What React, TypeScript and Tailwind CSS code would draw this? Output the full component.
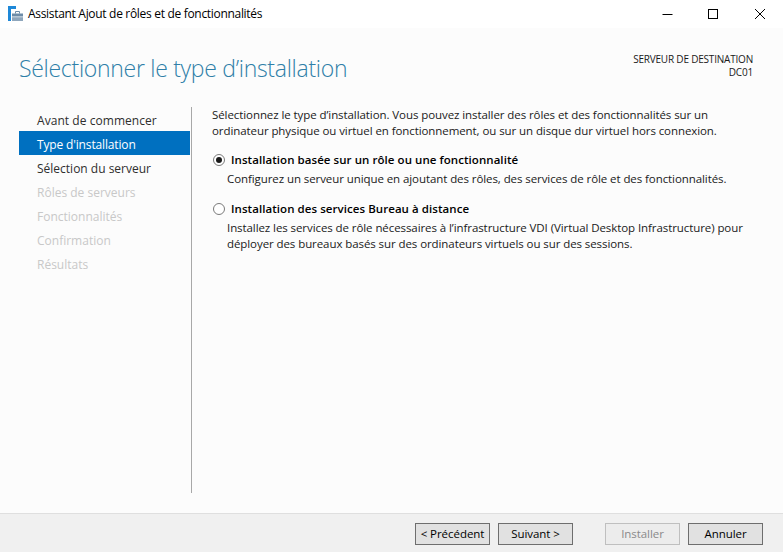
import React from "react";

function AppIcon() {
  return (
    <svg width="16" height="16" viewBox="0 0 16 16" className="shrink-0">
      <rect x="0" y="0" width="8" height="3" fill="#1e88d8" />
      <rect x="0" y="3" width="3" height="12" fill="#1e88d8" />
      <path d="M4 7.5h11V10.5H4z" fill="#6d8ca8" />
      <path d="M4 11.2h11V15H4z" fill="#8ea6bc" />
      <path d="M7.5 7.5V5.5h4V7.5" fill="none" stroke="#6d8ca8" strokeWidth="1" />
    </svg>
  );
}

function Btn({ label, disabled }: { label: string; disabled?: boolean }) {
  return (
    <button
      className={
        disabled
          ? "w-[75px] h-[22px] border border-[#bfbfbf] bg-[#ececec] text-[#8a8a8a] text-[11.5px] leading-[20px] tracking-[-0.05px]"
          : "w-[75px] h-[22px] border border-[#6e6e6e] bg-[#e1e1e1] text-black text-[11.5px] leading-[20px] tracking-[-0.05px]"
      }
    >
      {label}
    </button>
  );
}

function Radio({ checked }: { checked?: boolean }) {
  return (
    <span className="w-[12px] h-[12px] shrink-0 rounded-full border border-[#7a7a7a] bg-white flex items-center justify-center">
      {checked && <span className="w-[6px] h-[6px] rounded-full bg-[#1a1a1a]" />}
    </span>
  );
}

const steps: { t: string; state: "on" | "sel" | "off"; extra?: string }[] = [
  { t: "Avant de commencer", state: "on", extra: "tracking-[0.05px]" },
  { t: "Type d'installation", state: "sel", extra: "tracking-[-0.15px]" },
  { t: "Sélection du serveur", state: "on" },
  { t: "Rôles de serveurs", state: "off" },
  { t: "Fonctionnalités", state: "off" },
  { t: "Confirmation", state: "off" },
  { t: "Résultats", state: "off" },
];

export default function App() {
  return (
    <div className="w-[783px] h-[552px] flex flex-col overflow-hidden bg-white text-black font-['Open_Sans','Noto_Sans',sans-serif]">
      <div className="h-[28px] shrink-0 bg-white flex items-center pl-[8px]">
        <AppIcon />
        <span className="ml-[4px] text-[12px] tracking-[-0.31px] text-black leading-none">
          Assistant Ajout de rôles et de fonctionnalités
        </span>
        <div className="ml-auto flex items-center h-full">
          <svg width="12" height="12" viewBox="0 0 12 12" className="mr-[34px]">
            <path d="M1.5 6.5h10" stroke="#000" strokeWidth="1" />
          </svg>
          <svg width="12" height="12" viewBox="0 0 12 12" className="mr-[35px]">
            <rect x="1.5" y="1.5" width="9" height="9" fill="none" stroke="#000" strokeWidth="1" />
          </svg>
          <svg width="12" height="12" viewBox="0 0 12 12" className="mr-[17px]">
            <path d="M1 1l10 10M11 1L1 11" stroke="#000" strokeWidth="1" />
          </svg>
        </div>
      </div>

      <div className="flex-1 bg-[#fcfcfc] flex flex-col min-h-0">
        <div className="h-[79px] shrink-0 flex justify-between pl-[19px] pr-[30px]">
          <h1 className="mt-[20px] text-[23px] leading-[40px] font-light text-[#2f7fa8] tracking-[-0.29px]">
            Sélectionner le type d’installation
          </h1>
          <div className="mt-[25px] text-right text-[10px] leading-[13px] text-[#1a1a1a] tracking-[-0.2px]">
            <div>SERVEUR DE DESTINATION</div>
            <div>DC01</div>
          </div>
        </div>

        <div className="flex h-[386px] pl-[19px]">
          <nav className="w-[171px] shrink-0 flex flex-col">
            {steps.map((s) => (
              <div
                key={s.t}
                className={
                  "h-[24px] pl-[18px] text-[12px] leading-[28px] " +
                  (s.extra ? s.extra + " " : "") +
                  (s.state === "sel"
                    ? "bg-[#0070c0] text-white"
                    : s.state === "on"
                    ? "text-[#2e2e2e]"
                    : "text-[#c8c8c8]")
                }
              >
                {s.t}
              </div>
            ))}
          </nav>
          <div className="w-px ml-px bg-[#a8a8a8] shrink-0" />
          <div className="pl-[20px] w-[570px] text-[11.5px] leading-[16px] tracking-[-0.08px] text-[#1a1a1a]">
            <p className="whitespace-nowrap">
              Sélectionnez le type d’installation. Vous pouvez installer des rôles et des fonctionnalités sur un
              <br />
              ordinateur physique ou virtuel en fonctionnement, ou sur un disque dur virtuel hors connexion.
            </p>
            <div className="mt-[13px] flex items-center h-[16px] pl-[1px] gap-[6px]">
              <Radio checked />
              <span className="font-semibold text-black tracking-[0.06px]">
                Installation basée sur un rôle ou une fonctionnalité
              </span>
            </div>
            <p className="mt-[3px] pl-[15px] whitespace-nowrap">
              Configurez un serveur unique en ajoutant des rôles, des services de rôle et des fonctionnalités.
            </p>
            <div className="mt-[14px] flex items-center h-[16px] pl-[1px] gap-[6px]">
              <Radio />
              <span className="font-semibold text-black tracking-[0.06px]">
                Installation des services Bureau à distance
              </span>
            </div>
            <p className="mt-[3px] pl-[15px] whitespace-nowrap">
              Installez les services de rôle nécessaires à l’infrastructure VDI (Virtual Desktop Infrastructure) pour
              <br />
              déployer des bureaux basés sur des ordinateurs virtuels ou sur des sessions.
            </p>
          </div>
        </div>
        <div className="flex-1" />
      </div>

      <div className="h-[39px] shrink-0 bg-[#f0f0f0] border-t border-[#dfdfdf] flex items-start pt-[9px] pl-[415px]">
        <Btn label="< Précédent" />
        <div className="w-[8px]" />
        <Btn label="Suivant >" />
        <div className="w-[32px]" />
        <Btn label="Installer" disabled />
        <div className="w-[8px]" />
        <Btn label="Annuler" />
      </div>
    </div>
  );
}
